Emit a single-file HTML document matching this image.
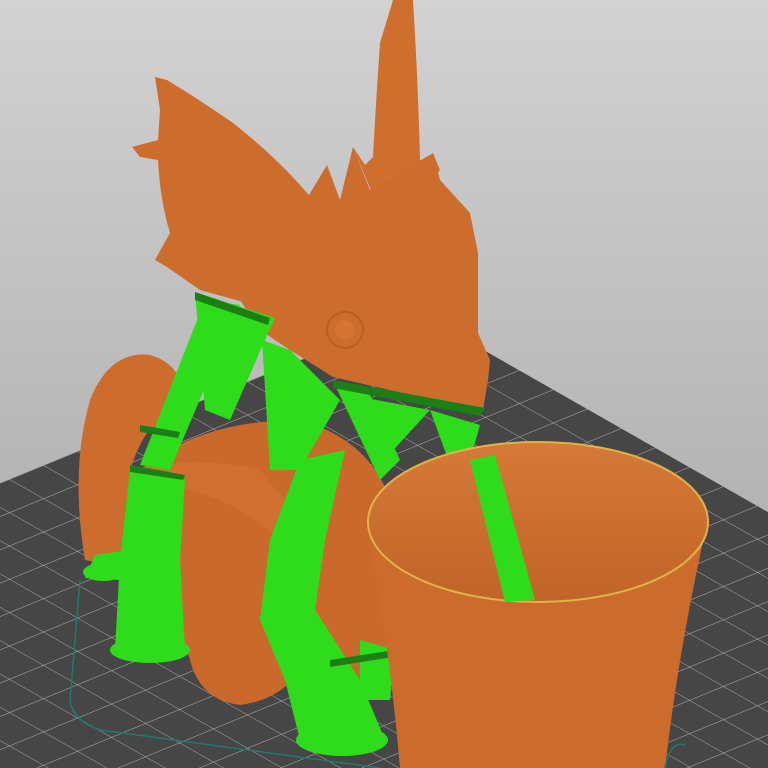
<!DOCTYPE html>
<html><head><meta charset="utf-8"><style>
html,body{margin:0;padding:0;width:768px;height:768px;overflow:hidden;background:#b8b8b8}
svg{display:block}
</style></head><body>
<svg width="768" height="768" viewBox="0 0 768 768" xmlns="http://www.w3.org/2000/svg">
<defs>
<linearGradient id="bg" x1="0" y1="0" x2="0" y2="1">
<stop offset="0" stop-color="#d2d2d2"/><stop offset="1" stop-color="#a4a4a4"/>
</linearGradient>
<pattern id="grid" width="34" height="34" patternUnits="userSpaceOnUse" patternTransform="matrix(1,-0.41,1,0.57,417,312)">
<rect width="34" height="34" fill="#464646"/>
<path d="M0 0H34M0 0V34" stroke="#b8b8b8" stroke-width="1"/>
</pattern>
<linearGradient id="cupin" x1="0" y1="0" x2="0" y2="1">
<stop offset="0" stop-color="#d67a38"/><stop offset="1" stop-color="#c06428"/>
</linearGradient>
</defs>
<rect width="768" height="768" fill="url(#bg)"/>
<polygon points="0,483 417,312 768,512 768,768 0,768" fill="url(#grid)"/>
<path d="M80,580 L70,700 Q72,720 100,730 L380,768" fill="none" stroke="#1f7a70" stroke-width="1.5"/>

<path d="M85,560 Q70,470 90,400 Q110,350 150,355 Q185,365 185,405 L180,430 Q160,420 150,430 Q140,440 130,470 Q125,520 135,570 Z" fill="#cd6d2d"/>
<path d="M140,470 Q200,420 300,420 Q370,440 390,500 L400,580 Q395,640 380,680 Q330,690 300,670 Q280,700 240,705 Q200,700 190,660 Q170,600 160,540 Z" fill="#c9692b"/>
<path d="M130,470 Q200,455 260,470 L300,520 L280,540 Q230,490 135,480 Z" fill="#d07030"/>
<path d="M155,77 L167,80 Q200,100 233,123 Q280,160 313,200 L300,280 L247,303 L200,290 L167,267 L155,260 L170,233 Q160,200 158,160 L140,157 L132,147 L158,140 L160,110 Z" fill="#cd6d2d"/>
<path d="M393,0 L413,0 Q418,80 420,160 L430,160 L433,153 L440,170 L420,200 L375,200 L353,147 L365,165 L373,157 Q376,100 380,43 Z" fill="#cf6f2e"/>
<path d="M240,300 L300,210 L327,165 L340,200 L353,147 L370,190 L433,153 L440,180 L470,213 L478,253 L478,333 L490,360 L488,380 L483,410 L433,400 L333,377 L290,350 L260,330 Z" fill="#cd6d2d"/>
<circle cx="345" cy="330" r="10" fill="#d47532"/>
<circle cx="345" cy="330" r="18" fill="none" stroke="#b85e24" stroke-width="2"/>
<g fill="#2fdc1c">
<path d="M195,292 L275,318 L265,340 L230,420 L205,410 Z"/>
<path d="M205,300 L240,305 L170,470 L140,465 Z"/>
<path d="M262,340 L290,350 L340,400 L300,470 L270,470 Z"/>
<path d="M130,470 L185,480 L180,560 L185,650 L115,650 L120,560 Z"/>
<path d="M95,555 L130,550 L120,580 L85,578 Z"/>
<ellipse cx="103" cy="572" rx="20" ry="9"/>
<ellipse cx="150" cy="650" rx="40" ry="13"/>
<path d="M300,460 L345,450 L325,540 L315,610 L360,680 L385,740 L300,740 L285,680 L260,620 L270,540 Z"/>
<ellipse cx="342" cy="740" rx="46" ry="16"/>
<path d="M335,385 L370,395 L400,460 L380,480 Z"/>
<path d="M350,395 L430,410 L375,470 Z"/>
<path d="M430,410 L480,425 L470,460 L535,600 L500,600 Z"/>
<path d="M360,640 L395,650 L390,700 L360,700 Z"/>
</g>
<g fill="#1c7f16">
<path d="M195,292 L270,318 L268,325 L195,300Z"/>
<path d="M333,380 L485,408 L480,416 L333,388Z"/>
<path d="M130,465 L185,475 L183,480 L130,472Z"/>
<path d="M140,425 L180,432 L178,438 L140,432Z"/>
<path d="M330,660 L395,650 L393,657 L330,667Z"/>
</g>
<path d="M368,530 Q390,650 400,768 L665,768 Q680,640 708,520 Z" fill="#cc6c2c"/>
<ellipse cx="538" cy="522" rx="170" ry="80" fill="url(#cupin)" stroke="#e2b24a" stroke-width="2"/>
<path d="M470,460 L495,455 L535,600 L505,602 Z" fill="#2fdc1c"/>
<path d="M665,768 Q670,740 685,745" fill="none" stroke="#1f7a70" stroke-width="1.5"/>
</svg>
</body></html>
